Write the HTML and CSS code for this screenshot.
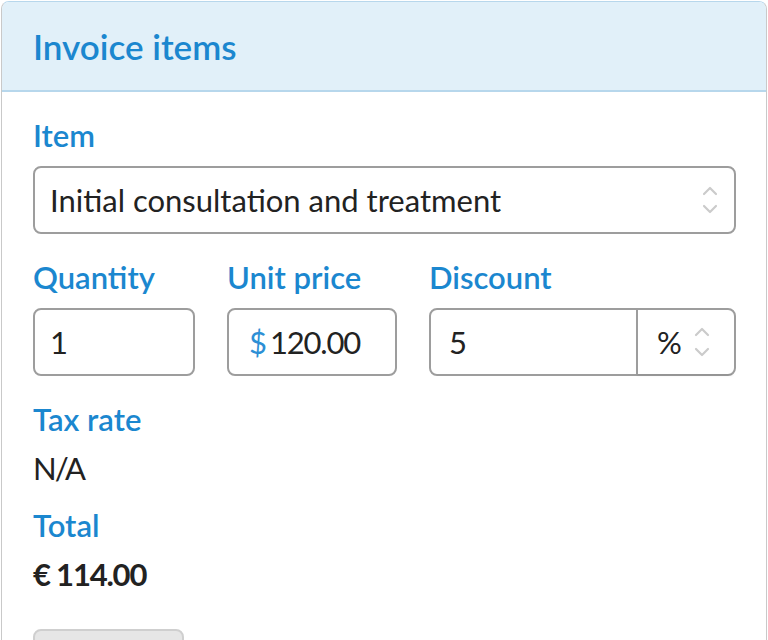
FILE: index.html
```html
<!DOCTYPE html>
<html lang="en">
<head>
<meta charset="utf-8">
<title>Invoice items</title>
<link rel="stylesheet" href="styles.css">
</head>
<body>
<section class="card">
  <header class="card-header">
    <h2 class="card-title">Invoice items</h2>
  </header>
  <div class="card-body">
    <div class="field">
      <label class="label">Item</label>
      <div class="control select">
        <span class="value">Initial consultation and treatment</span>
        <svg class="updown" viewBox="0 0 16 28" width="16" height="28"><path d="M2 8 L8 2 L14 8 M2 20 L8 26 L14 20" fill="none" stroke="#cbcbcb" stroke-width="2.2" stroke-linecap="round" stroke-linejoin="round"/></svg>
      </div>
    </div>
    <div class="row">
      <div class="field">
        <label class="label">Quantity</label>
        <div class="control"><span class="value num">1</span></div>
      </div>
      <div class="field">
        <label class="label">Unit price</label>
        <div class="control"><span class="prefix">$</span><span class="value num">120.00</span></div>
      </div>
      <div class="field">
        <label class="label">Discount</label>
        <div class="control group">
          <span class="value grow">5</span>
          <span class="addon">%<svg class="updown small" viewBox="0 0 16 30" width="16" height="30"><path d="M2 8 L8 2 L14 8 M2 22 L8 28 L14 22" fill="none" stroke="#cbcbcb" stroke-width="2.2" stroke-linecap="round" stroke-linejoin="round"/></svg></span>
        </div>
      </div>
    </div>
    <div class="field tight">
      <div class="label">Tax rate</div>
      <div class="static na">N/A</div>
    </div>
    <div class="field tight">
      <div class="label">Total</div>
      <div class="static total">€ 114.00</div>
    </div>
    <button class="btn" type="button">Add</button>
  </div>
</section>
</body>
</html>
```
FILE: styles.css
```css
html, body {
  margin: 0;
  padding: 0;
  background: #fff;
}
body {
  font-family: Lato, "Open Sans", sans-serif;
  color: #222;
  overflow: hidden;
  height: 640px;
}
.card {
  margin: 1px 1px 0 1px;
  border: 1px solid #c9c9c9;
  border-top-color: #b7d7ec;
  border-radius: 8px;
  min-height: 700px;
  overflow: hidden;
}
.card-header {
  background: #e1f0f9;
  border-bottom: 2px solid #b7d7ec;
  height: 88px;
  display: flex;
  align-items: center;
  padding: 0 31px;
}
.card-title {
  margin: 0;
  font-size: 35px;
  font-weight: 600;
  color: #1b87cf;
}
.card-body {
  padding: 25px 30px 0 31px;
}
.field {
  margin-bottom: 25px;
}
.field.tight {
  margin-bottom: 21px;
}
.label {
  display: block;
  font-size: 31px;
  line-height: 36px;
  font-weight: 600;
  color: #1b87cf;
  margin-bottom: 13px;
}
.control {
  height: 68px;
  box-sizing: border-box;
  border: 2px solid #9d9d9d;
  border-radius: 8px;
  display: flex;
  align-items: center;
  padding: 0 15px 0 15px;
  font-size: 31px;
}
.select {
  justify-content: space-between;
}
.num {
  letter-spacing: -1.2px;
}
.updown {
  margin-right: 1px;
}
.updown.small {
  width: 16px;
  height: 30px;
  margin-left: 12px;
}
.row {
  display: grid;
  grid-template-columns: 162px 170px 1fr;
  column-gap: 32px;
}
.prefix {
  color: #2d8fd5;
  margin-right: 3px;
  margin-left: 5px;
}
.group {
  padding: 0;
}
.grow {
  flex: 1;
  padding-left: 18px;
}
.addon {
  width: 98px;
  height: 100%;
  box-sizing: border-box;
  border-left: 2px solid #9d9d9d;
  display: flex;
  align-items: center;
  padding-left: 19px;
  box-shadow: 0 3px 2px -1px rgba(0,0,0,0.06);
}
.static {
  font-size: 31px;
  line-height: 36px;
}
.na {
  letter-spacing: -2px;
}
.total {
  font-weight: 700;
  letter-spacing: -1.2px;
}
.btn {
  display: block;
  margin-top: 37px;
  width: 151px;
  height: 50px;
  background: #e6e6e6;
  border: 2px solid #cfcfcf;
  border-radius: 8px;
  font-family: inherit;
  font-size: 28px;
  color: transparent;
}
```
